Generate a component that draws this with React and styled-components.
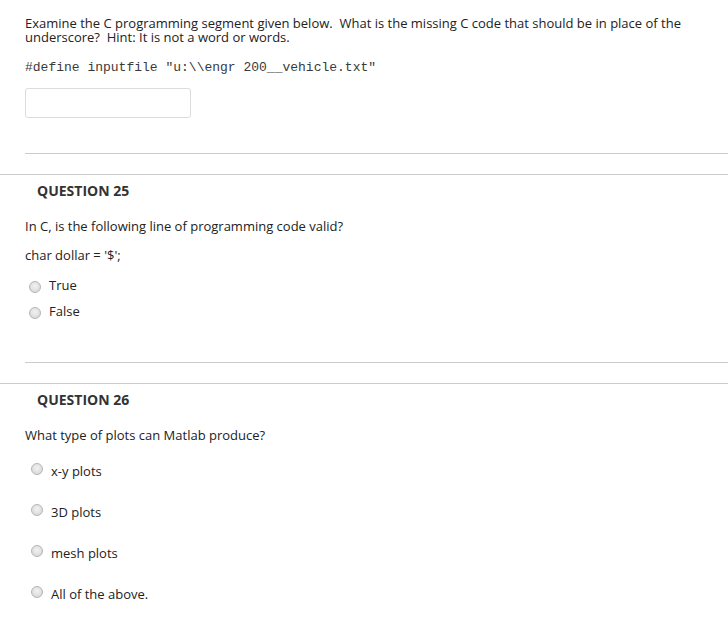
import React from 'react';
import styled, { createGlobalStyle } from 'styled-components';

const GlobalStyle = createGlobalStyle`
  html, body {
    margin: 0;
    padding: 0;
    background: #ffffff;
  }
  body {
    font-family: "Open Sans", "Liberation Sans", Arial, sans-serif;
    color: #222222;
    font-size: 13px;
  }
`;

const questions = [
  {
    number: 25,
    prompt: 'In C, is the following line of programming code valid?',
    detail: "char dollar = '$';",
    options: ['True', 'False'],
    compact: true,
  },
  {
    number: 26,
    prompt: 'What type of plots can Matlab produce?',
    options: ['x-y plots', '3D plots', 'mesh plots', 'All of the above.'],
    compact: false,
  },
];

const App = () => (
  <Page>
    <GlobalStyle />
    <Block>
      <Prompt>
        Examine the C programming segment given below.&nbsp; What is the missing C code that should be in place of the
        underscore?&nbsp; Hint: It is not a word or words.
      </Prompt>
      <Code>#define inputfile "u:\\engr 200__vehicle.txt"</Code>
      <AnswerInput type="text" />
    </Block>

    {questions.map((q, i) => (
      <React.Fragment key={q.number}>
        <InnerRule $after={i === 0 ? 35 : 42} />
        <OuterRule />
        <Heading>QUESTION {q.number}</Heading>
        <Block>
          <Question>{q.prompt}</Question>
          {q.detail && <Detail>{q.detail}</Detail>}
          <Options $compact={q.compact}>
            {q.options.map((opt) => (
              <Option key={opt}>
                <Radio $compact={q.compact} />
                <span>{opt}</span>
              </Option>
            ))}
          </Options>
        </Block>
      </React.Fragment>
    ))}
  </Page>
);

export default App;

const Page = styled.div`
  width: 728px;
  min-height: 640px;
  padding-top: 16px;
  box-sizing: border-box;
`;

const Block = styled.div`
  padding: 0 22px 0 25px;
`;

const Prompt = styled.p`
  margin: 0;
  font-size: 13px;
  line-height: 14px;
  color: #222;
`;

const Code = styled.div`
  margin-top: 16px;
  font-family: "Liberation Mono", "Courier New", monospace;
  font-size: 13px;
  line-height: 15px;
  color: #3a3a3a;
  white-space: pre;
`;

const AnswerInput = styled.input`
  display: block;
  margin-top: 13px;
  width: 166px;
  height: 30px;
  box-sizing: border-box;
  border: 1px solid #dcdcdc;
  border-radius: 3px;
  background: #fff;
  outline: none;
`;

const InnerRule = styled.hr`
  margin: ${(p) => p.$after}px 0 0 25px;
  border: 0;
  border-top: 1px solid #cccccc;
  height: 0;
`;

const OuterRule = styled.hr`
  margin: 20px 0 0 0;
  border: 0;
  border-top: 1px solid #cccccc;
  height: 0;
`;

const Heading = styled.h3`
  margin: 7px 0 0 37px;
  font-size: 14px;
  line-height: 18px;
  font-weight: 700;
  color: #333;
`;

const Question = styled.p`
  margin: 17px 0 0;
  font-size: 13px;
  line-height: 18px;
`;

const Detail = styled.p`
  margin: 11px 0 0;
  font-size: 13px;
  line-height: 18px;
`;

const Options = styled.div`
  display: flex;
  flex-direction: column;
  gap: ${(p) => (p.$compact ? '8px' : '23px')};
  margin-top: ${(p) => (p.$compact ? '12px' : '18px')};
  padding-left: ${(p) => (p.$compact ? '4px' : '6px')};
`;

const Option = styled.label`
  display: flex;
  align-items: center;
  gap: 8px;
  font-size: 13px;
  line-height: 18px;
  color: #222;
`;

const Radio = styled.span`
  display: inline-block;
  width: 12px;
  height: 12px;
  border-radius: 50%;
  border: 1px solid #b5b5b5;
  background: radial-gradient(circle at 50% 40%, #f2f2f2 0%, #dcdcdc 70%, #cfcfcf 100%);
  box-sizing: border-box;
  margin-top: ${(p) => (p.$compact ? '3px' : '-4px')};
`;
